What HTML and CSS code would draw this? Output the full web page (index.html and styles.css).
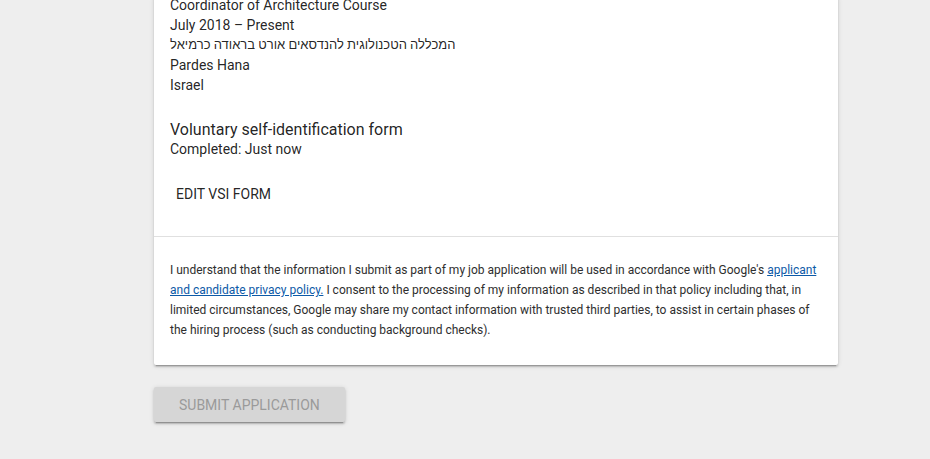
FILE: index.html
```html
<!DOCTYPE html>
<html lang="en">
<head>
<meta charset="utf-8">
<title>Application review</title>
<link rel="stylesheet" href="styles.css">
</head>
<body>
<div class="page">
  <div class="card">
    <section class="details">
      <div class="line">Coordinator of Architecture Course</div>
      <div class="line">July 2018 – Present</div>
      <div class="line hebrew">המכללה הטכנולוגית להנדסאים אורט בראודה כרמיאל</div>
      <div class="line">Pardes Hana</div>
      <div class="line">Israel</div>
      <h3 class="vsi-title">Voluntary self-identification form</h3>
      <div class="line">Completed: Just now</div>
      <button class="flat-btn" type="button">Edit VSI form</button>
    </section>
    <section class="consent">
      <p>I understand that the information I submit as part of my job application will be used in accordance with Google's <a href="#">applicant and candidate privacy policy.</a> I consent to the processing of my information as described in that policy including that, in limited circumstances, Google may share my contact information with trusted third parties, to assist in certain phases of the hiring process (such as conducting background checks).</p>
    </section>
  </div>
  <button class="submit-btn" type="button" disabled>Submit application</button>
</div>
</body>
</html>
```
FILE: styles.css
```css
html, body {
  margin: 0;
  padding: 0;
  background: #eeeeee;
  font-family: Roboto, "Liberation Sans", Arial, sans-serif;
  color: rgba(0, 0, 0, 0.87);
}
.page {
  padding-left: 154px;
  padding-bottom: 40px;
  width: 684px;
}
.card {
  margin-top: -5px;
  background: #ffffff;
  border-radius: 2px;
  box-shadow: 0 2px 2px 0 rgba(0,0,0,.14), 0 3px 1px -2px rgba(0,0,0,.2), 0 1px 5px 0 rgba(0,0,0,.12);
}
.details {
  padding: 0 16px 24px;
  font-size: 14px;
  line-height: 20px;
}
.line {
  font-size: 14px;
  line-height: 20px;
}
.line.hebrew {
  font-size: 13px;
}
.vsi-title {
  margin: 25px 0 0;
  font-size: 16px;
  line-height: 19px;
  font-weight: 400;
}
.flat-btn {
  display: block;
  margin-top: 17px;
  height: 36px;
  padding: 0 6px;
  border: none;
  background: transparent;
  font-family: inherit;
  font-size: 14px;
  color: rgba(0, 0, 0, 0.87);
  text-transform: uppercase;
  cursor: pointer;
}
.consent {
  border-top: 1px solid #e0e0e0;
  padding: 23px 16px 25px;
  font-size: 12px;
  line-height: 20px;
  color: #2e2e2e;
}
.consent p {
  margin: 0;
}
.consent a {
  color: #0d5aa7;
  text-decoration: underline;
}
.submit-btn {
  display: block;
  margin-top: 22px;
  height: 35px;
  padding: 0 25px;
  border: none;
  border-radius: 2px;
  background: #d6d6d6;
  color: #9a9a9a;
  font-family: inherit;
  font-size: 14px;
  text-transform: uppercase;
  box-shadow: 0 2px 2px 0 rgba(0,0,0,.16), 0 3px 1px -2px rgba(0,0,0,.22), 0 1px 5px 0 rgba(0,0,0,.14);
}
```
